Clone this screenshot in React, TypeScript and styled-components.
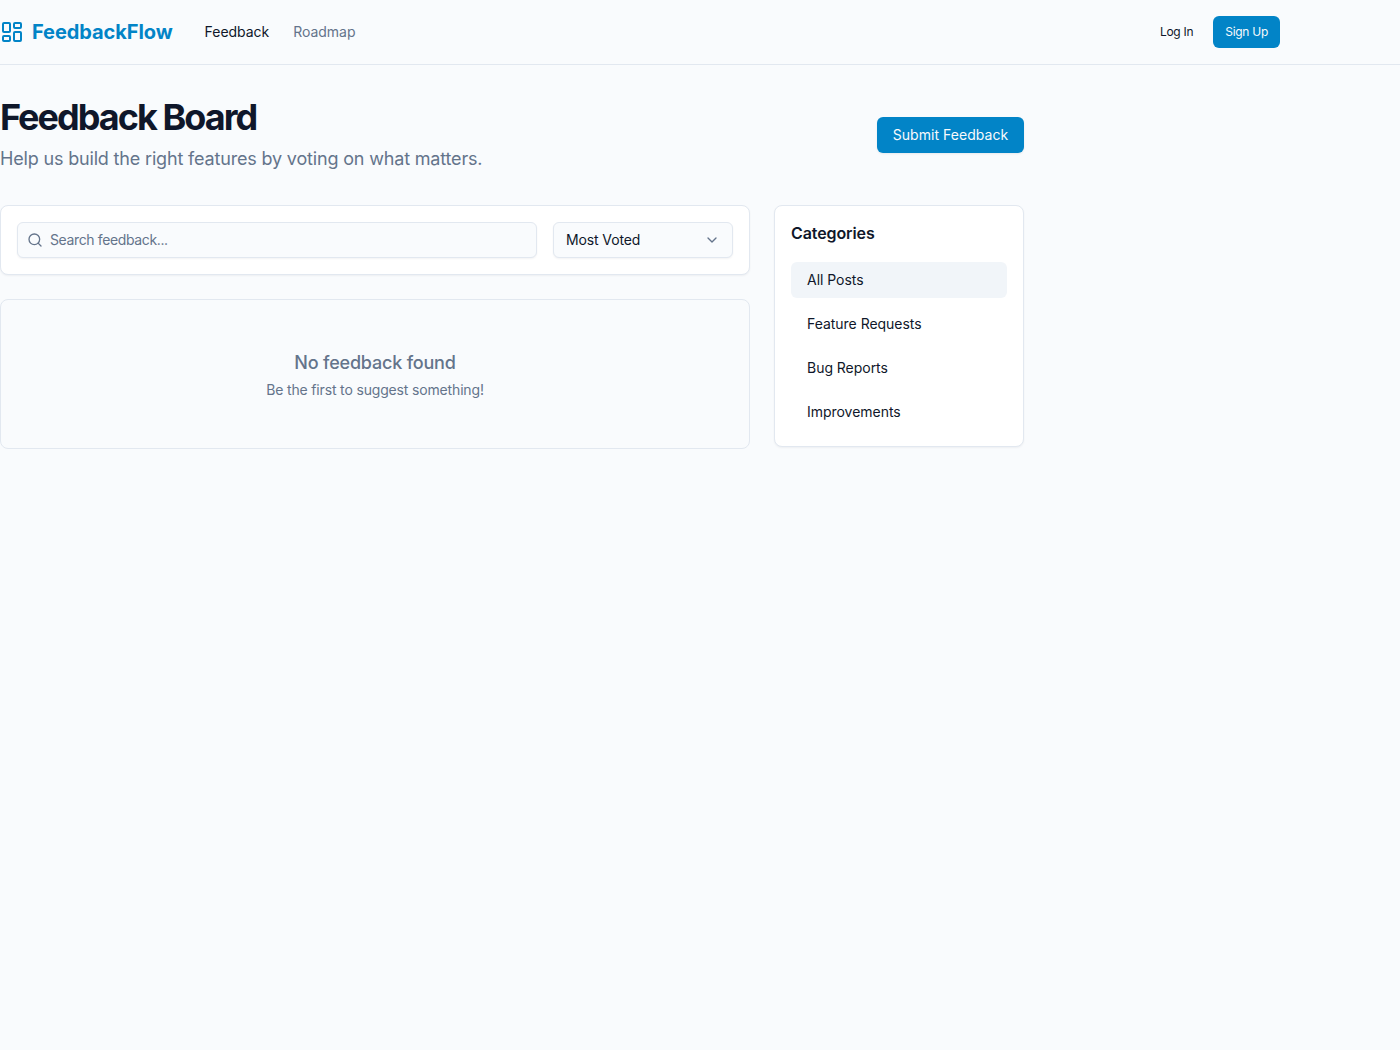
import styled, { createGlobalStyle } from "styled-components";
import { ChevronDown, LayoutDashboard, Search } from "lucide-react";

const GlobalStyle = createGlobalStyle`
  body {
    margin: 0;
    background: #f9fbfd;
    color: #0f172a;
    font-family: Inter, "Noto Sans", sans-serif;
  }
  * {
    box-sizing: border-box;
  }
`;

const Page = styled.div`
  min-height: 1050px;
  background: #f9fbfd;
`;

const Header = styled.header`
  height: 65px;
  border-bottom: 1px solid #e2e8f0;
`;

const HeaderInner = styled.div`
  width: 1280px;
  height: 64px;
  display: flex;
  align-items: center;
  justify-content: space-between;
`;

const HeaderLeft = styled.div`
  display: flex;
  align-items: center;
  gap: 32px;
`;

const Logo = styled.a`
  display: flex;
  align-items: center;
  gap: 8px;
  color: #0284c7;
  font-size: 20px;
  line-height: 28px;
  font-weight: 700;
  letter-spacing: -0.08px;
`;

const Nav = styled.nav`
  display: flex;
  align-items: center;
  gap: 24px;
`;

const NavLink = styled.a<{ $active?: boolean }>`
  font-size: 14px;
  line-height: 20px;
  font-weight: 400;
  letter-spacing: -0.03px;
  color: ${(p) => (p.$active ? "#0f172a" : "#64748b")};
`;

const HeaderRight = styled.div`
  display: flex;
  align-items: center;
  gap: 8px;
`;

const SmallButton = styled.button<{ $primary?: boolean }>`
  height: 32px;
  padding: 0 12px 1px;
  border: 0;
  border-radius: 6px;
  font-family: inherit;
  font-size: 12px;
  font-weight: 400;
  letter-spacing: -0.28px;
  color: ${(p) => (p.$primary ? "#f8fafc" : "#0f172a")};
  background: ${(p) => (p.$primary ? "#0284c7" : "transparent")};
`;

const Main = styled.main`
  width: 1024px;
  padding-top: 32px;
`;

const TitleRow = styled.div`
  display: flex;
  align-items: center;
  justify-content: space-between;
  margin-bottom: 32px;
`;

const Title = styled.h1`
  margin: 0 0 8px;
  font-size: 36px;
  line-height: 40px;
  font-weight: 700;
  letter-spacing: -1.97px;
  color: #0f172a;
`;

const Subtitle = styled.p`
  margin: 0;
  font-size: 18px;
  line-height: 28px;
  letter-spacing: -0.17px;
  color: #64748b;
`;

const SubmitButton = styled.button`
  width: 147px;
  height: 36px;
  padding: 0 0 1px;
  border: 0;
  border-radius: 6px;
  background: #0284c7;
  box-shadow: 0 1px 2px rgba(15, 23, 42, 0.08);
  color: #f8fafc;
  font-family: inherit;
  font-size: 14px;
  font-weight: 400;
  letter-spacing: 0.05px;
`;

const Columns = styled.div`
  display: grid;
  grid-template-columns: 750px 250px;
  gap: 24px;
  align-items: start;
`;

const Feed = styled.div`
  display: flex;
  flex-direction: column;
  gap: 24px;
`;

const Card = styled.section`
  background: #ffffff;
  border: 1px solid #e2e8f0;
  border-radius: 8px;
  box-shadow: 0 1px 2px rgba(15, 23, 42, 0.05);
  padding: 16px;
`;

const Filters = styled(Card)`
  display: flex;
  gap: 16px;
`;

const Field = styled.div`
  height: 36px;
  display: flex;
  align-items: center;
  background: #f9fbfd;
  border: 1px solid #e2e8f0;
  border-radius: 6px;
  box-shadow: 0 1px 2px rgba(15, 23, 42, 0.05);
  font-size: 14px;
`;

const SearchField = styled(Field)`
  flex: 1;
  gap: 7px;
  padding: 0 9px;
  color: #64748b;
`;

const SortField = styled(Field)`
  width: 180px;
  justify-content: space-between;
  padding: 0 12px;
  color: #0f172a;
`;

const FieldText = styled.span<{ $tight?: boolean }>`
  padding-bottom: 1px;
  letter-spacing: ${(p) => (p.$tight ? "-0.37px" : "-0.12px")};
`;

const Empty = styled.section`
  height: 150px;
  display: flex;
  flex-direction: column;
  align-items: center;
  padding-top: 48px;
  background: #f9fbfd;
  border: 1px solid #e2e8f0;
  border-radius: 8px;
`;

const EmptyTitle = styled.h3`
  margin: 1px 0 3px;
  font-size: 18px;
  line-height: 28px;
  font-weight: 500;
  letter-spacing: -0.2px;
  color: #64748b;
`;

const EmptyText = styled.p`
  margin: 0;
  font-size: 14px;
  line-height: 20px;
  letter-spacing: -0.16px;
  color: #64748b;
`;

const SideTitle = styled.h3`
  margin: 0 0 18px;
  font-size: 16px;
  line-height: 22px;
  font-weight: 600;
  letter-spacing: -0.1px;
  color: #0f172a;
`;

const CategoryList = styled.div`
  display: flex;
  flex-direction: column;
  gap: 8px;
`;

const Category = styled.a<{ $active?: boolean }>`
  height: 36px;
  display: flex;
  align-items: center;
  padding: 0 16px 1px;
  border-radius: 6px;
  font-size: 14px;
  font-weight: 400;
  letter-spacing: -0.03px;
  color: #0f172a;
  background: ${(p) => (p.$active ? "#f1f5f9" : "transparent")};
`;

const categories = ["All Posts", "Feature Requests", "Bug Reports", "Improvements"];

export default function App() {
  return (
    <Page>
      <GlobalStyle />
      <Header>
        <HeaderInner>
          <HeaderLeft>
            <Logo>
              <LayoutDashboard size={24} strokeWidth={2} />
              FeedbackFlow
            </Logo>
            <Nav>
              <NavLink $active>Feedback</NavLink>
              <NavLink>Roadmap</NavLink>
            </Nav>
          </HeaderLeft>
          <HeaderRight>
            <SmallButton>Log In</SmallButton>
            <SmallButton $primary>Sign Up</SmallButton>
          </HeaderRight>
        </HeaderInner>
      </Header>
      <Main>
        <TitleRow>
          <div>
            <Title>Feedback Board</Title>
            <Subtitle>Help us build the right features by voting on what matters.</Subtitle>
          </div>
          <SubmitButton>Submit Feedback</SubmitButton>
        </TitleRow>
        <Columns>
          <Feed>
            <Filters>
              <SearchField>
                <Search size={16} color="#64748b" />
                <FieldText $tight>Search feedback...</FieldText>
              </SearchField>
              <SortField>
                <FieldText>Most Voted</FieldText>
                <ChevronDown size={16} color="#64748b" />
              </SortField>
            </Filters>
            <Empty>
              <EmptyTitle>No feedback found</EmptyTitle>
              <EmptyText>Be the first to suggest something!</EmptyText>
            </Empty>
          </Feed>
          <Card>
            <SideTitle>Categories</SideTitle>
            <CategoryList>
              {categories.map((c, i) => (
                <Category key={c} $active={i === 0}>
                  {c}
                </Category>
              ))}
            </CategoryList>
          </Card>
        </Columns>
      </Main>
    </Page>
  );
}
